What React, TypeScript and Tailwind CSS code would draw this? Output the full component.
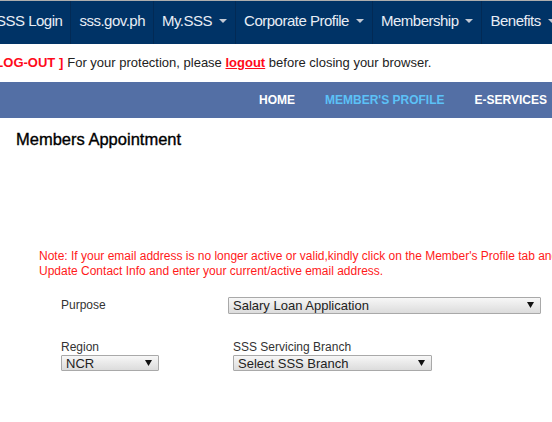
import React from "react";

const navItems = [
  { label: "SSS Login", caret: false },
  { label: "sss.gov.ph", caret: false },
  { label: "My.SSS", caret: true },
  { label: "Corporate Profile", caret: true },
  { label: "Membership", caret: true },
  { label: "Benefits", caret: true },
];

const subLinks = [
  { label: "HOME", active: false },
  { label: "MEMBER'S PROFILE", active: true },
  { label: "E-SERVICES", active: false },
];

function Caret() {
  return <span className="ml-[7px] inline-block h-0 w-0 border-x-[4px] border-t-[4px] border-x-transparent border-t-[#c3c9d4]" />;
}

function FakeSelect({ value, width, height }: { value: string; width: string; height: string }) {
  return (
    <div
      className={`flex items-center justify-between rounded-[1px] border border-[#a9a9a9] bg-gradient-to-b from-[#f7f7f7] to-[#dcdcdc] pl-[4px] pr-[6px] text-[13px] leading-none text-[#222] ${width} ${height}`}
    >
      <span>{value}</span>
      <svg width="7" height="6" viewBox="0 0 7 6" aria-hidden>
        <polygon points="0,0 7,0 3.5,6" fill="#111" />
      </svg>
    </div>
  );
}

export default function App() {
  return (
    <div className="h-[422px] w-[552px] overflow-hidden bg-white font-['Liberation_Sans',Arial,sans-serif]">
      <div className="h-px bg-[#aeaeae]" />
      <nav className="flex h-[43px] whitespace-nowrap bg-[#003366] text-[15px] tracking-[-0.5px] text-[#e8edf5]">
        {navItems.map((item, i) => (
          <div
            key={item.label}
            className={`flex items-center border-r border-[#022a55] px-[8px] pb-[3px] ${i === 0 ? "ml-[-12px]" : ""}`}
          >
            {item.label}
            {item.caret && <Caret />}
          </div>
        ))}
      </nav>

      <div className="flex h-[38px] items-center whitespace-nowrap text-[13px] text-[#222]">
        <span className="ml-[-9px] font-bold text-[#ff0a1a]">[LOG-OUT ]</span>
        <span className="ml-[4px]">
          For your protection, please{" "}
          <a href="#" className="font-bold text-[#ff0a1a] underline">
            logout
          </a>{" "}
          before closing your browser.
        </span>
      </div>

      <div className="flex h-[36px] items-center whitespace-nowrap bg-[#536fa5] pl-[244px] text-[12px] font-bold">
        {subLinks.map((l) => (
          <span key={l.label} className={`px-[15px] ${l.active ? "text-[#5cc1f7]" : "text-white"}`}>
            {l.label}
          </span>
        ))}
      </div>

      <h1 className="ml-[16px] mt-[11px] text-[16.5px] leading-[20px] text-black [-webkit-text-stroke:0.35px_#000]">
        Members Appointment
      </h1>

      <p className="ml-[39px] mt-[100px] whitespace-nowrap text-[12px] leading-[15px] text-[#ff1a1a]">
        Note: If your email address is no longer active or valid,kindly click on the Member's Profile tab and
        <br />
        Update Contact Info and enter your current/active email address.
      </p>

      <div className="mt-[17px] flex items-center text-[12px] text-[#333]">
        <span className="ml-[61px] w-[167px]">Purpose</span>
        <FakeSelect value="Salary Loan Application" width="w-[313px]" height="h-[17px]" />
      </div>

      <div className="mt-[26px] flex text-[12px] leading-[14px] text-[#333]">
        <div className="ml-[61px] flex w-[172px] flex-col gap-[1px]">
          <span>Region</span>
          <FakeSelect value="NCR" width="w-[98px]" height="h-[16px]" />
        </div>
        <div className="flex flex-col gap-[1px]">
          <span>SSS Servicing Branch</span>
          <FakeSelect value="Select SSS Branch" width="w-[199px]" height="h-[16px]" />
        </div>
      </div>
    </div>
  );
}
